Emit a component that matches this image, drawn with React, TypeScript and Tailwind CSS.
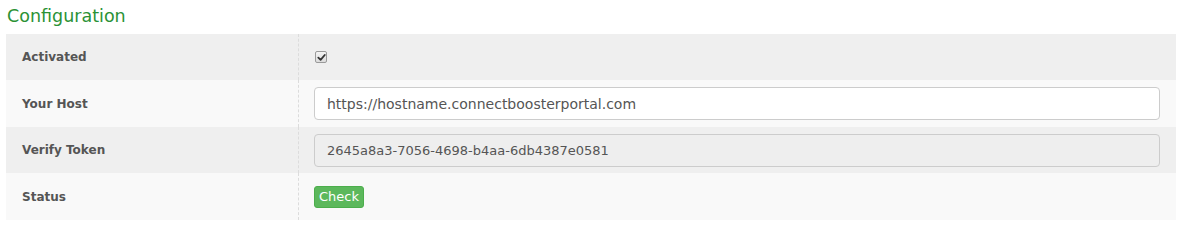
import React, { useState } from "react";

const rows = ["Activated", "Your Host", "Verify Token", "Status"];

export default function App() {
  const [activated, setActivated] = useState(true);
  const [host, setHost] = useState("https://hostname.connectboosterportal.com");

  return (
    <div className="min-h-screen bg-white px-[6px] pt-[3px] font-['DejaVu_Sans',sans-serif] text-[#555]">
      {/* Title */}
      <h2 className="text-[17.5px] leading-[26px] font-normal text-[#2b9236] mb-[5px] pl-px">Configuration</h2>

      {/* Settings table */}
      <div className="w-[1170px] flex flex-col">
        <div className="flex h-[46px] bg-[#efefef]">
          <div className="w-[292px] flex items-center pl-[16px] text-[12px] font-bold text-[#555]">{rows[0]}</div>
          <div className="flex-1 flex items-center pl-[16px] border-l border-dashed border-[#dcdcdc]">
            <label className="relative w-[12px] h-[12px] cursor-pointer">
              <input
                type="checkbox"
                checked={activated}
                onChange={(e) => setActivated(e.target.checked)}
                className="absolute inset-0 opacity-0 m-0"
              />
              <span className="flex w-[12px] h-[12px] items-center justify-center rounded-[2px] border border-[#9a9a9a] bg-gradient-to-b from-[#f4f4f4] to-[#dcdcdc]">
                {activated && (
                  <svg viewBox="0 0 10 10" className="w-[9px] h-[9px]">
                    <path d="M1.5 5.2 L4 7.6 L8.6 2.2" fill="none" stroke="#333" strokeWidth="2" strokeLinecap="round" strokeLinejoin="round" />
                  </svg>
                )}
              </span>
            </label>
          </div>
        </div>

        <div className="flex h-[47px] bg-[#f9f9f9]">
          <div className="w-[292px] flex items-center pl-[16px] text-[12px] font-bold text-[#555]">{rows[1]}</div>
          <div className="flex-1 flex items-center pl-[15px] pr-[16px] border-l border-dashed border-[#dcdcdc]">
            <input
              type="text"
              value={host}
              onChange={(e) => setHost(e.target.value)}
              className="w-full h-[33px] px-[12px] bg-white border border-[#ccc] rounded-[4px] text-[14px] text-[#555] outline-none"
            />
          </div>
        </div>

        <div className="flex h-[46px] bg-[#efefef]">
          <div className="w-[292px] flex items-center pl-[16px] text-[12px] font-bold text-[#555]">{rows[2]}</div>
          <div className="flex-1 flex items-center pl-[15px] pr-[16px] border-l border-dashed border-[#dcdcdc]">
            <input
              type="text"
              readOnly
              value="2645a8a3-7056-4698-b4aa-6db4387e0581"
              className="w-full h-[33px] px-[12px] bg-[#eee] border border-[#ccc] rounded-[4px] text-[13px] text-[#555] outline-none"
            />
          </div>
        </div>

        <div className="flex h-[47px] bg-[#f9f9f9]">
          <div className="w-[292px] flex items-center pl-[16px] text-[12px] font-bold text-[#555]">{rows[3]}</div>
          <div className="flex-1 flex items-center pl-[15px] border-l border-dashed border-[#dcdcdc]">
            <button
              type="button"
              className="h-[22px] px-[4px] rounded-[3px] bg-[#5cb85c] border border-[#4cae4c] text-white text-[13px] leading-none"
            >
              Check
            </button>
          </div>
        </div>
      </div>
    </div>
  );
}
